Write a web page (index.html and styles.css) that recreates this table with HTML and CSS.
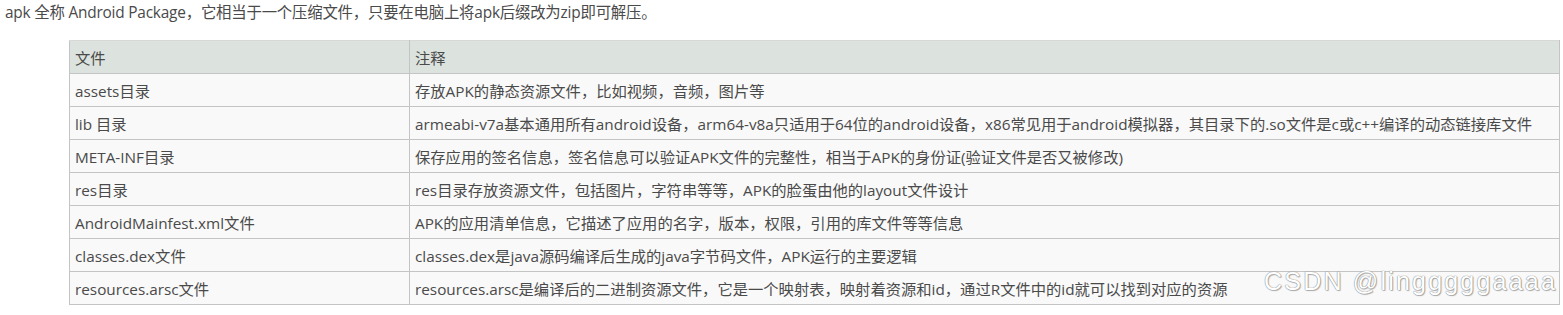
FILE: index.html
```html
<!DOCTYPE html>
<html lang="zh">
<head>
<meta charset="utf-8">
<link rel="stylesheet" href="styles.css">
</head>
<body>
<p class="intro">apk 全称 Android Package，它相当于一个压缩文件，只要在电脑上将apk后缀改为zip即可解压。</p>
<div class="wrap">
<table class="files">
<thead>
<tr><th class="c1">文件</th><th>注释</th></tr>
</thead>
<tbody>
<tr><td>assets目录</td><td>存放APK的静态资源文件，比如视频，音频，图片等</td></tr>
<tr><td>lib 目录</td><td>armeabi-v7a基本通用所有android设备，arm64-v8a只适用于64位的android设备，x86常见用于android模拟器，其目录下的.so文件是c或c++编译的动态链接库文件</td></tr>
<tr><td>META-INF目录</td><td>保存应用的签名信息，签名信息可以验证APK文件的完整性，相当于APK的身份证(验证文件是否又被修改)</td></tr>
<tr><td>res目录</td><td>res目录存放资源文件，包括图片，字符串等等，APK的脸蛋由他的layout文件设计</td></tr>
<tr><td>AndroidMainfest.xml文件</td><td>APK的应用清单信息，它描述了应用的名字，版本，权限，引用的库文件等等信息</td></tr>
<tr><td>classes.dex文件</td><td>classes.dex是java源码编译后生成的java字节码文件，APK运行的主要逻辑</td></tr>
<tr><td>resources.arsc文件</td><td>resources.arsc是编译后的二进制资源文件，它是一个映射表，映射着资源和id，通过R文件中的id就可以找到对应的资源</td></tr>
</tbody>
</table>
<div class="watermark">CSDN @lingggggaaaa</div>
</div>
</body>
</html>
```
FILE: styles.css
```css
html, body {
  margin: 0;
  padding: 0;
  background: #ffffff;
}
body {
  font-family: "Open Sans", "Noto Sans CJK SC", sans-serif;
  font-size: 15.3px;
  color: #4a4a4a;
}
.intro {
  margin: 0;
  padding: 4px 0 0 5px;
  line-height: 18px;
  font-size: 15.4px;
  letter-spacing: -0.2px;
}
.wrap {
  position: relative;
  padding: 18px 0 0 69px;
}
.files {
  border-collapse: collapse;
  width: 1491px;
  table-layout: fixed;
  background: #f9f9f9;
}
.files th, .files td {
  border: 1px solid #c4c4c4;
  height: 32px;
  padding: 0 5px;
  text-align: left;
  font-weight: normal;
  white-space: nowrap;
  overflow: hidden;
}
.files .c1 {
  width: 329px;
}
.files thead th {
  background: #dce3df;
  border-top-color: #d8d8d8;
}
.watermark {
  position: absolute;
  right: 6px;
  top: 245px;
  font-family: "Liberation Sans", sans-serif;
  font-size: 25px;
  color: #ffffff;
  letter-spacing: 2.2px;
  text-shadow: 0 0 1px #8a8a8a, 0 0 1px #8a8a8a, 1px 1px 1px #b0b0b0;
}
```
